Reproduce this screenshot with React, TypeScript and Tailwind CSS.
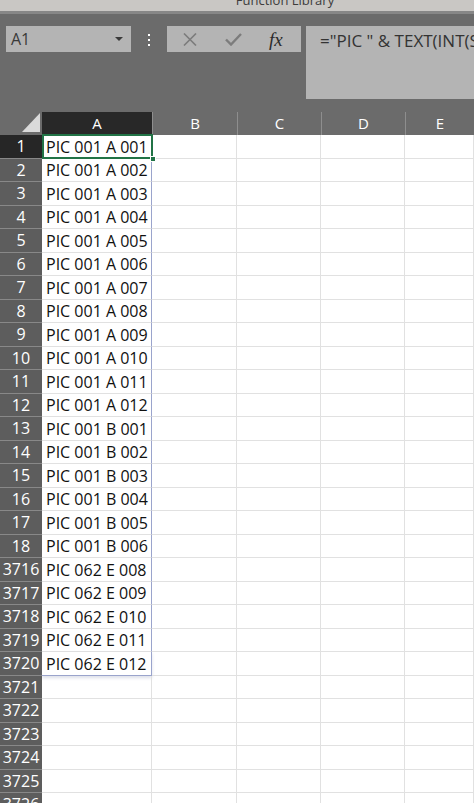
const rows: { n: string; v: string }[] = [
  ...Array.from({ length: 12 }, (_, i) => ({ n: String(i + 1), v: `PIC 001 A ${String(i + 1).padStart(3, '0')}` })),
  ...Array.from({ length: 6 }, (_, i) => ({ n: String(i + 13), v: `PIC 001 B ${String(i + 1).padStart(3, '0')}` })),
  ...Array.from({ length: 5 }, (_, i) => ({ n: String(3716 + i), v: `PIC 062 E ${String(i + 8).padStart(3, '0')}` })),
  ...Array.from({ length: 6 }, (_, i) => ({ n: String(3721 + i), v: '' })),
];

const cols = ['B', 'C', 'D', 'E'];

function XIcon() {
  return (
    <svg width="14" height="13" viewBox="0 0 14 13" fill="none" stroke="#7c7c7c" strokeWidth="1.6">
      <path d="M1 0.5 L13 12.5 M13 0.5 L1 12.5" />
    </svg>
  );
}

function CheckIcon() {
  return (
    <svg width="17" height="13" viewBox="0 0 17 13" fill="none" stroke="#7c7c7c" strokeWidth="2.4">
      <path d="M1 6.5 L6 11.5 L16 1" />
    </svg>
  );
}

export default function App() {
  return (
    <div className="relative h-[803px] w-[474px] overflow-hidden bg-white font-['Open_Sans',sans-serif]">
      {/* ribbon bottom */}
      <div className="flex h-[14px] justify-center border-b-[3px] border-[#878787] bg-[#c9c7c4] pl-[96px]">
        <span className="-mt-[8px] text-[13px] leading-[16px] text-[#3c3c3c]">Function Library</span>
      </div>

      {/* name box + formula bar */}
      <div className="flex h-[98px] items-start bg-[#6b6b6b] pt-[12px]">
        <div className="ml-[6px] flex h-[26px] w-[125px] items-center justify-between bg-[#b4b4b4] pl-[5px] pr-[8px]">
          <span className="text-[16px] leading-none text-[#3a3a3a]">A1</span>
          <span className="h-0 w-0 border-x-[4px] border-t-[4px] border-x-transparent border-t-[#3a3a3a]" />
        </div>
        <div className="ml-[17px] mt-[8px] flex flex-col gap-[3px]">
          <span className="h-[2px] w-[2px] bg-white" />
          <span className="h-[2px] w-[2px] bg-white" />
          <span className="h-[2px] w-[2px] bg-white" />
        </div>
        <div className="ml-[17px] flex h-[26px] w-[134px] items-center bg-[#b4b4b4]">
          <span className="ml-[16px] flex"><XIcon /></span>
          <span className="ml-[28px] flex"><CheckIcon /></span>
          <span className="ml-[27px] font-['Liberation_Serif',serif] text-[19px] italic leading-none text-[#2b2b2b]">fx</span>
        </div>
        <div className="ml-[5px] h-[73px] flex-1 overflow-hidden whitespace-nowrap bg-[#b4b4b4] pl-[14px] pt-[3px]">
          <span className="text-[17px] leading-[22px] text-[#333333]">="PIC " &amp; TEXT(INT(SEQUENCE(</span>
        </div>
      </div>

      {/* column headers */}
      <div className="grid h-[23px] grid-cols-[42px_110px_85px_84px_84px_1fr] bg-[#6b6b6b] text-[15px] leading-none text-white">
        <div className="flex items-end justify-end pb-[3px] pr-[2px]">
          <svg width="18" height="19" viewBox="0 0 18 19">
            <path d="M18 0 L18 19 L0 19 Z" fill="#dadada" />
          </svg>
        </div>
        <div className="flex items-center justify-center bg-[#282828]">A</div>
        {cols.map((c) => (
          <div key={c} className="flex items-center justify-center border-l border-[#8e8e8e]">
            {c}
          </div>
        ))}
      </div>

      {/* rows */}
      <div className="relative">
        {rows.map((r, i) => (
          <div key={r.n} className="grid h-[23.5px] grid-cols-[42px_110px_85px_84px_84px_1fr]">
            <div
              className={`flex items-center justify-center border-b border-[#888888] text-[16px] leading-none text-white ${
                i === 0 ? 'bg-[#262626]' : 'bg-[#5d5d5d]'
              }`}
            >
              {r.n}
            </div>
            <div
              className={`flex items-center whitespace-nowrap border-b border-r pl-[4px] pt-[1px] text-[16px] leading-none text-[#111111] ${
                i < 23 ? 'border-r-[#9aa4cc]' : 'border-r-[#e1e1e1]'
              } ${i === 22 ? 'border-b-[#9aa4cc] shadow-[0_2px_3px_rgba(120,130,170,0.25)]' : 'border-b-[#e1e1e1]'}`}
            >
              {r.v}
            </div>
            {cols.map((c) => (
              <div key={c} className="border-b border-r border-[#e1e1e1]" />
            ))}
          </div>
        ))}

        {/* active cell */}
        <div className="absolute left-[42px] top-[-1px] h-[25px] w-[111px] border-2 border-[#217346]" />
        <div className="absolute left-[150px] top-[21px] h-[6px] w-[6px] border border-white bg-[#217346]" />
      </div>
    </div>
  );
}
